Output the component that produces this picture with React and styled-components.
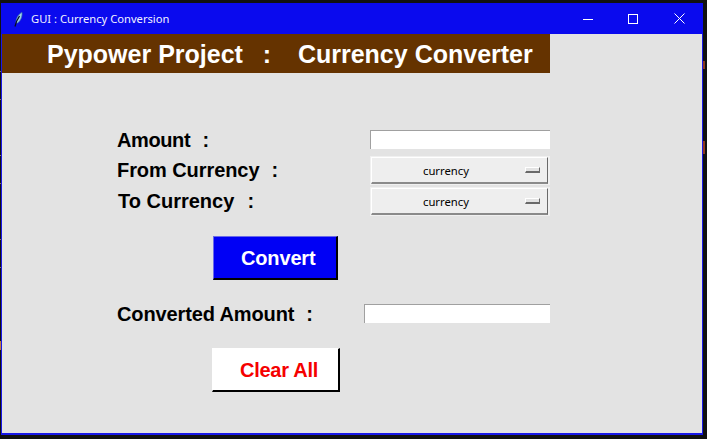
import React from "react";
import styled, { createGlobalStyle } from "styled-components";

const Global = createGlobalStyle`
  html, body { margin: 0; padding: 0; background: #111111; }
  body { width: 707px; height: 439px; overflow: hidden; font-family: "Liberation Sans", Arial, sans-serif; }
`;

const Desktop = styled.div`
  position: relative;
  width: 707px;
  height: 439px;
  box-sizing: border-box;
  padding: 3px 4px 4px 1px;
  background: #111111;
`;

const Speck = styled.div`
  position: absolute;
  left: ${(p) => p.$x}px;
  top: ${(p) => p.$y}px;
  width: ${(p) => p.$w}px;
  height: ${(p) => p.$h}px;
  background: ${(p) => p.$c};
`;

const Window = styled.div`
  width: 702px;
  height: 432px;
  box-sizing: border-box;
  border: 1px solid #1818e8;
  border-top: 0;
  border-bottom-width: 2px;
  background: #e3e3e3;
  display: flex;
  flex-direction: column;
`;

const TitleBar = styled.div`
  height: 31px;
  flex: none;
  margin: 0 -1px;
  box-sizing: border-box;
  padding-right: 1px;
  background: #0a0aee;
  display: flex;
  align-items: center;
  color: #fff;
  font-family: "Noto Sans", "Open Sans", sans-serif;
  font-size: 11.2px;
`;

const AppIcon = styled.svg`
  width: 9px;
  height: 16px;
  margin-left: 13px;
  margin-right: 8px;
`;

const TitleText = styled.span`
  flex: 1;
  color: #f2f2ff;
`;

const WinButton = styled.div`
  width: 46px;
  height: 31px;
  box-sizing: border-box;
  padding-left: ${(p) => p.$nudge || 0}px;
  display: flex;
  align-items: center;
  justify-content: center;
`;

const Banner = styled.div`
  width: 548px;
  height: 39px;
  flex: none;
  box-sizing: border-box;
  padding-left: 45px;
  background: #653300;
  color: #fff;
  font-size: 25px;
  font-weight: 700;
  line-height: 41px;
  white-space: pre;
`;

const BannerColon = styled.span`
  margin-left: -1px;
  margin-right: 6px;
`;

const Form = styled.div`
  margin-left: 115px;
  padding-top: 57px;
  display: flex;
  flex-direction: column;
`;

const Row = styled.div`
  width: 433px;
  display: flex;
  align-items: center;
  justify-content: space-between;
  height: ${(p) => p.$h}px;
  margin-bottom: ${(p) => p.$mb || 0}px;
`;

const Label = styled.span`
  font-size: 20px;
  font-weight: 700;
  color: #000;
  white-space: pre;
  margin-left: ${(p) => p.$indent || 0}px;
  padding-top: ${(p) => p.$drop || 0}px;
  letter-spacing: ${(p) => p.$track || 0}px;
`;

const Colon = styled.span`
  margin-left: ${(p) => p.$gap}px;
`;

const Entry = styled.div`
  width: ${(p) => p.$w}px;
  height: 19px;
  box-sizing: border-box;
  background: #fff;
  border-top: 1px solid #a0a0a0;
  border-left: 1px solid #a0a0a0;
`;

const MenuFrame = styled.div`
  width: 180px;
  height: 29px;
  box-sizing: border-box;
  padding: 1px 2px 1px 1px;
  background: #f0f0f0;
`;

const Menu = styled.div`
  height: 100%;
  box-sizing: border-box;
  border-top: 1px solid #fff;
  border-left: 1px solid #fff;
  border-right: 1px solid #696969;
  border-bottom: 2px solid #8a8a8a;
  background: #eeeeee;
  display: flex;
  align-items: center;
  font-family: "Noto Sans", "Open Sans", sans-serif;
  font-size: 11.3px;
  color: #000;
`;

const MenuText = styled.span`
  flex: 1;
  text-align: center;
  padding-top: 1px;
  padding-right: 5px;
`;

const Indicator = styled.span`
  width: 13px;
  height: 3px;
  margin-right: 7px;
  margin-bottom: 1px;
  box-sizing: content-box;
  background: #e3e3e3;
  border-top: 1px solid #fff;
  border-left: 1px solid #fff;
  border-right: 1px solid #696969;
  border-bottom: 2px solid #696969;
`;

const ButtonRow = styled.div`
  padding-left: ${(p) => p.$indent}px;
  margin-bottom: ${(p) => p.$mb || 0}px;
`;

const ActionButton = styled.button`
  display: block;
  width: ${(p) => p.$w}px;
  height: ${(p) => p.$h}px;
  box-sizing: border-box;
  padding: 1px 0 0 ${(p) => p.$pl}px;
  text-align: left;
  background: ${(p) => p.$bg};
  color: ${(p) => p.$fg};
  font-family: "Liberation Sans", Arial, sans-serif;
  font-size: 20px;
  font-weight: 700;
  letter-spacing: ${(p) => p.$track || 0}px;
  border-style: solid;
  border-width: 1px 2px 2px 1px;
  border-color: ${(p) => p.$light} #000 #000 ${(p) => p.$light};
`;

export default function App() {
  return (
    <>
      <Global />
      <Desktop>
        <Speck $x={0} $y={341} $w={1} $h={9} $c="#c08040" />
        <Speck $x={0} $y={71} $w={1} $h={1} $c="#8a7868" />
        <Speck $x={0} $y={99} $w={1} $h={1} $c="#8a7868" />
        <Speck $x={0} $y={155} $w={1} $h={1} $c="#8a7868" />
        <Speck $x={0} $y={183} $w={1} $h={1} $c="#8a7868" />
        <Speck $x={0} $y={239} $w={1} $h={1} $c="#8a7868" />
        <Speck $x={0} $y={267} $w={1} $h={1} $c="#8a7868" />
        <Speck $x={703} $y={61} $w={2} $h={8} $c="#8a3a20" />
        <Speck $x={703} $y={141} $w={2} $h={13} $c="#8f3a20" />
        <Window>
          <TitleBar>
            <AppIcon viewBox="0 0 9 16">
              <path d="M2 12 C2 8 4 3 8 1.5 C8.5 6 6 10.5 3.5 12 Z" fill="#9fd0ea" stroke="#3f7fa8" strokeWidth="0.7" />
              <path d="M1 15.5 L2.5 10.5 L5.5 5" stroke="#0a0a20" strokeWidth="1.2" fill="none" />
            </AppIcon>
            <TitleText>GUI : Currency Conversion</TitleText>
            <WinButton $nudge={2}>
              <svg width="10" height="10" viewBox="0 0 10 10"><path d="M0 5.5H10" stroke="#fff" strokeWidth="1" /></svg>
            </WinButton>
            <WinButton>
              <svg width="10" height="10" viewBox="0 0 10 10"><rect x="0.5" y="0.5" width="9" height="9" fill="none" stroke="#fff" strokeWidth="1" /></svg>
            </WinButton>
            <WinButton>
              <svg width="11" height="11" viewBox="0 0 11 11"><path d="M0.5 0.5L10.5 10.5M10.5 0.5L0.5 10.5" stroke="#fff" strokeWidth="1" /></svg>
            </WinButton>
          </TitleBar>
          <Banner>{"Pypower Project   "}<BannerColon>:</BannerColon>{"   Currency Converter"}</Banner>
          <Form>
            <Row $h={19} $mb={7}>
              <Label $track={-0.4} $drop={2}>{"Amount  "}<Colon $gap={2}>:</Colon></Label>
              <Entry $w={180} />
            </Row>
            <Row $h={29} $mb={2}>
              <Label $track={-0.07}>{"From Currency  "}<Colon $gap={1}>:</Colon></Label>
              <MenuFrame><Menu><MenuText>currency</MenuText><Indicator /></Menu></MenuFrame>
            </Row>
            <Row $h={29} $mb={20}>
              <Label $indent={1}>{"To Currency  "}<Colon $gap={2}>:</Colon></Label>
              <MenuFrame><Menu><MenuText>currency</MenuText><Indicator /></Menu></MenuFrame>
            </Row>
            <ButtonRow $indent={96} $mb={24}>
              <ActionButton $w={125} $h={44} $pl={27} $track={-0.15} $bg="#0000f5" $fg="#fff" $light="#6a6ae8">Convert</ActionButton>
            </ButtonRow>
            <Row $h={19} $mb={25}>
              <Label $track={-0.12} $drop={2}>{"Converted Amount  "}<Colon $gap={1}>:</Colon></Label>
              <Entry $w={186} />
            </Row>
            <ButtonRow $indent={95}>
              <ActionButton $w={128} $h={44} $pl={27} $track={-0.25} $bg="#fff" $fg="#f50000" $light="#ffffff">Clear All</ActionButton>
            </ButtonRow>
          </Form>
        </Window>
      </Desktop>
    </>
  );
}
